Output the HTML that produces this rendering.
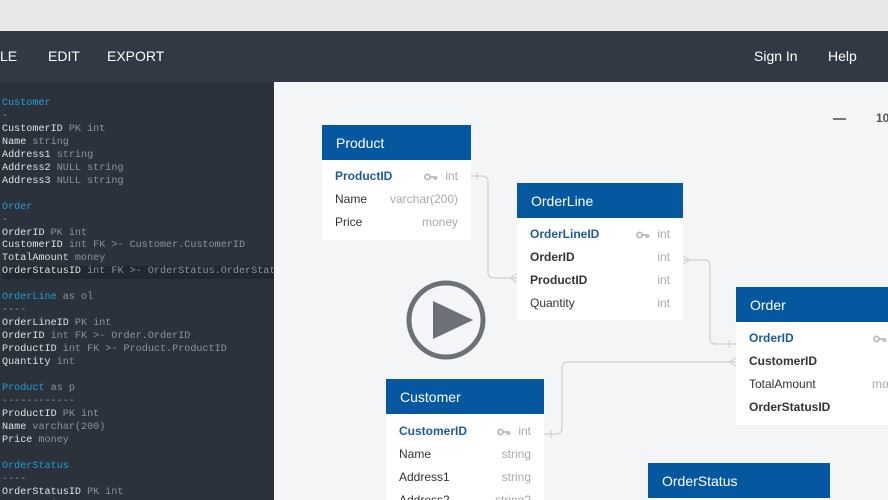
<!DOCTYPE html><html><head><style>
*{margin:0;padding:0;box-sizing:border-box}
html,body{width:888px;height:500px;overflow:hidden}
body{position:relative;background:#f4f5f6;font-family:"Liberation Sans",sans-serif}
#top{position:absolute;left:0;top:0;width:888px;height:31px;background:#e7e7e7}
#nav{position:absolute;left:0;top:31px;width:888px;height:51px;background:#313a44;color:#fff;font-size:14px}
#nav span{position:absolute;top:17px}
#ed{position:absolute;left:0;top:82px;width:274px;height:418px;background:#2b323b;font-family:"Liberation Mono",monospace;font-size:10.15px;color:#dfe3e6;padding:16px 0 0 2px;line-height:12.95px;white-space:pre;overflow:hidden}
.k{color:#1f9fd6}.g{color:#8a939c}
.hl{background:#222830;display:block;width:272px}
.t{position:absolute;background:#fff;font-size:12px;overflow:hidden}
.t .h{background:#0557a0;color:#fff;font-size:14px;height:35px;line-height:36px;padding-left:14px}
.t .r{height:23px;line-height:23px;padding:0 13px;position:relative;color:#333}
.t .r .ty{position:absolute;right:13px;top:0;color:#aaa;font-weight:normal}
.t .r.pk{color:#1d5c96;font-weight:bold}
.t .r.b{font-weight:bold}
.key{display:inline-block;width:14px;height:8px;margin-right:7px;vertical-align:-1px}
</style></head><body>
<div id="top"></div>
<div id="nav"><span style="left:0">LE</span><span style="left:48px">EDIT</span><span style="left:107px">EXPORT</span><span style="left:754px">Sign In</span><span style="left:828px">Help</span></div>
<div id="ed"><span class="k">Customer</span>
<span class="g">-</span>
CustomerID <span class="g">PK int</span>
Name <span class="g">string</span>
Address1 <span class="g">string</span>
Address2 <span class="g">NULL string</span>
Address3 <span class="g">NULL string</span>

<span class="k">Order</span>
<span class="g">-</span>
OrderID <span class="g">PK int</span>
CustomerID <span class="g">int FK &gt;- Customer.CustomerID</span>
TotalAmount <span class="g">money</span>
<span class="hl">OrderStatusID <span class="g">int FK &gt;- OrderStatus.OrderStatusID</span></span>
<span class="k">OrderLine</span> <span class="g">as ol</span>
<span class="g">----</span>
OrderLineID <span class="g">PK int</span>
OrderID <span class="g">int FK &gt;- Order.OrderID</span>
ProductID <span class="g">int FK &gt;- Product.ProductID</span>
Quantity <span class="g">int</span>

<span class="k">Product</span> <span class="g">as p</span>
<span class="g">------------</span>
ProductID <span class="g">PK int</span>
Name <span class="g">varchar(200)</span>
Price <span class="g">money</span>

<span class="k">OrderStatus</span>
<span class="g">----</span>
OrderStatusID <span class="g">PK int</span>
Name <span class="g">string</span></div>
<div style="position:absolute;left:833px;top:118px;width:13px;height:2px;background:#777"></div>
<div style="position:absolute;left:876px;top:111px;font-size:12px;color:#555;font-weight:bold">10</div>
<svg style="position:absolute;left:274px;top:82px" width="614" height="418" fill="none" stroke="#d4d7da" stroke-width="1.5">
<path d="M197 94 H208 Q214 94 214 100 V190 Q214 196 220 196 H243"/><path d="M203 90 v8"/><path d="M243 192 l-7 4 7 4"/>
<path d="M409 178 H430 Q436 178 436 184 V256 Q436 262 442 262 H462"/><path d="M409 174 l7 4 -7 4"/><path d="M455 258 v8"/>
<path d="M270 352 H282 Q288 352 288 346 V286 Q288 280 294 280 H462"/><path d="M277 348 v8"/><path d="M462 276 l-7 4 7 4"/>
</svg>
<svg width="0" height="0" style="position:absolute"><defs><symbol id="k" viewBox="0 0 14 8"><circle cx="3.5" cy="4" r="2.6" fill="none" stroke="#bbb" stroke-width="1.8"/><path d="M6 4H13M10.5 4V7M12.5 4V6.5" stroke="#bbb" stroke-width="1.8" fill="none"/></symbol></defs></svg>
<svg style="position:absolute;left:404px;top:280px" width="84" height="84"><circle cx="42" cy="40" r="37" fill="none" stroke="#6b7079" stroke-width="5"/><path d="M29 21 L69 40 L29 59Z" fill="#6b7079"/></svg>
<div class="t" style="left:322px;top:125px;width:149px;height:115px"><div class="h">Product</div><div style="height:5px"></div>
<div class="r pk">ProductID<span class="ty"><svg class="key"><use href="#k"/></svg>int</span></div>
<div class="r">Name<span class="ty">varchar(200)</span></div><div class="r">Price<span class="ty">money</span></div></div>
<div class="t" style="left:517px;top:183px;width:166px;height:137px"><div class="h">OrderLine</div><div style="height:5px"></div>
<div class="r pk">OrderLineID<span class="ty"><svg class="key"><use href="#k"/></svg>int</span></div>
<div class="r b">OrderID<span class="ty">int</span></div>
<div class="r b">ProductID<span class="ty">int</span></div>
<div class="r">Quantity<span class="ty">int</span></div></div>
<div class="t" style="left:736px;top:287px;width:152px;height:138px"><div class="h">Order</div><div style="height:5px"></div>
<div class="r pk">OrderID<span class="ty" style="right:-6px"><svg class="key"><use href="#k"/></svg></span></div>
<div class="r b">CustomerID</div>
<div class="r">TotalAmount<span class="ty" style="right:-20px">money</span></div>
<div class="r b">OrderStatusID</div></div>
<div class="t" style="left:386px;top:379px;width:158px;height:121px"><div class="h">Customer</div><div style="height:6px"></div>
<div class="r pk">CustomerID<span class="ty"><svg class="key"><use href="#k"/></svg>int</span></div>
<div class="r">Name<span class="ty">string</span></div><div class="r">Address1<span class="ty">string</span></div><div class="r">Address2<span class="ty">string?</span></div></div>
<div class="t" style="left:648px;top:463px;width:182px;height:37px"><div class="h">OrderStatus</div></div>
</body></html>
